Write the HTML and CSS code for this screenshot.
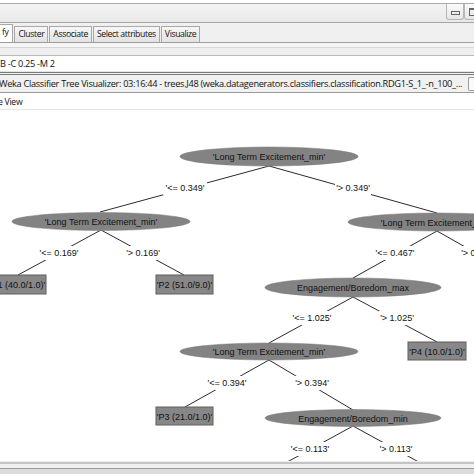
FILE: index.html
```html
<!DOCTYPE html>
<html lang="en">
<head>
  <meta charset="UTF-8" />
  <title>Weka Classifier Tree Visualizer</title>
  <link rel="stylesheet" href="styles.css">
</head>
<body>
  <div class="window">
    <div class="caption">
      <div class="caption-buttons">
        <span class="cap-btn"><span class="min-icon"></span></span>
        <span class="cap-btn"><span class="max-icon"></span></span>
      </div>
    </div>

    <div class="tabs">
      <span class="tab tab-active">fy</span>
      <span class="tab">Cluster</span>
      <span class="tab">Associate</span>
      <span class="tab">Select attributes</span>
      <span class="tab">Visualize</span>
    </div>

    <div class="band"></div>

    <div class="options">B -C 0.25 -M 2</div>

    <div class="viz-title">
      <span class="viz-text">Weka Classifier Tree Visualizer: 03:16:44 - trees.J48 (weka.datagenerators.classifiers.classification.RDG1-S_1_-n_100_...</span>
      <span class="viz-box"></span>
    </div>

    <div class="menu">e View</div>

    <div class="canvas">
      <svg class="tree" width="474" height="352" viewBox="0 110 474 352">
        <!-- edges -->
        <g class="edges">
          <line x1="269" y1="166" x2="100" y2="212" />
          <line x1="269" y1="166" x2="437" y2="213" />
          <line x1="101" y1="230" x2="18" y2="275" />
          <line x1="101" y1="230" x2="184" y2="275" />
          <line x1="437" y1="231" x2="353" y2="278" />
          <line x1="437" y1="231" x2="520" y2="278" />
          <line x1="353" y1="297" x2="269" y2="343" />
          <line x1="353" y1="297" x2="437" y2="342" />
          <line x1="269" y1="360" x2="185" y2="407" />
          <line x1="269" y1="360" x2="353" y2="410" />
          <line x1="353" y1="426" x2="269" y2="472" />
          <line x1="353" y1="426" x2="437" y2="472" />
        </g>

        <!-- edge labels -->
        <g class="labels">
          <rect x="163" y="181" width="44" height="14" /><text x="185" y="188">'&lt;= 0.349'</text>
          <rect x="335" y="181" width="36" height="14" /><text x="353" y="188">'&gt; 0.349'</text>
          <rect x="37" y="246" width="44" height="14" /><text x="59" y="253">'&lt;= 0.169'</text>
          <rect x="125" y="246" width="36" height="14" /><text x="143" y="253">'&gt; 0.169'</text>
          <rect x="373" y="246" width="44" height="14" /><text x="395" y="253">'&lt;= 0.467'</text>
          <rect x="460" y="246" width="36" height="14" /><text x="478" y="253">'&gt; 0.467'</text>
          <rect x="290" y="311" width="44" height="14" /><text x="312" y="318">'&lt;= 1.025'</text>
          <rect x="379" y="311" width="36" height="14" /><text x="397" y="318">'&gt; 1.025'</text>
          <rect x="205" y="376" width="44" height="14" /><text x="227" y="383">'&lt;= 0.394'</text>
          <rect x="294" y="376" width="36" height="14" /><text x="312" y="383">'&gt; 0.394'</text>
          <rect x="288" y="442" width="44" height="14" /><text x="310" y="449">'&lt;= 0.113'</text>
          <rect x="378" y="442" width="36" height="14" /><text x="396" y="449">'&gt; 0.113'</text>
        </g>

        <!-- split nodes -->
        <g class="nodes">
          <ellipse cx="269" cy="156.5" rx="89" ry="9.5" /><text x="269" y="157">'Long Term Excitement_min'</text>
          <ellipse cx="101" cy="221.5" rx="89" ry="9" /><text x="101" y="222">'Long Term Excitement_min'</text>
          <ellipse cx="437" cy="222" rx="89" ry="9" /><text x="437" y="222.5">'Long Term Excitement_min'</text>
          <ellipse cx="353" cy="287.5" rx="88" ry="9.5" /><text x="353" y="288">Engagement/Boredom_max</text>
          <ellipse cx="269" cy="351.5" rx="89" ry="8.5" /><text x="269" y="352">'Long Term Excitement_min'</text>
          <ellipse cx="353" cy="418" rx="88" ry="8.5" /><text x="353" y="418.5">Engagement/Boredom_min</text>
        </g>

        <!-- leaves -->
        <g class="leaves">
          <rect x="-11" y="275" width="57" height="19" /><text x="17.5" y="285">'P1 (40.0/1.0)'</text>
          <rect x="156" y="275" width="57" height="19" /><text x="184.5" y="285">'P2 (51.0/9.0)'</text>
          <rect x="408" y="342" width="58" height="18" /><text x="437" y="351.5">'P4 (10.0/1.0)'</text>
          <rect x="156" y="407" width="57" height="18" /><text x="184.5" y="416.5">'P3 (21.0/1.0)'</text>
        </g>
      </svg>
    </div>

    <div class="bottom"></div>
  </div>
</body>
</html>
```

FILE: styles.css
```css
body {
  margin: 0;
  padding: 0;
  background: #ffffff;
  font-family: "Open Sans", "Noto Sans", sans-serif;
  color: #111;
}

.window {
  width: 474px;
  height: 474px;
  overflow: hidden;
  display: flex;
  flex-direction: column;
}

/* window caption */
.caption {
  height: 18px;
  margin-top: 3px;
  border-top: 1px solid #a9a9a9;
  background: linear-gradient(to bottom, #f3f3f3, #e9e9e9);
  display: flex;
  justify-content: flex-end;
}

.caption-buttons {
  display: flex;
  margin-right: -8px;
}

.cap-btn {
  width: 16px;
  height: 15px;
  border: 1px solid #b7b7b7;
  border-top: none;
  border-radius: 0 0 3px 3px;
  background: linear-gradient(to bottom, #fafafa, #e6e6e6);
  display: flex;
  align-items: center;
  justify-content: center;
}

.min-icon {
  width: 7px;
  height: 2px;
  border: 1px solid #666;
  margin-top: 3px;
}

.max-icon {
  width: 6px;
  height: 5px;
  border: 1px solid #666;
  border-top-width: 2px;
}

/* tab strip */
.tabs {
  height: 19px;
  border-top: 1px solid #a5a5a5;
  border-bottom: 1px solid #9e9e9e;
  background: #f0f0f0;
  display: flex;
  align-items: flex-end;
  gap: 1px;
  font-size: 8.7px;
  letter-spacing: -0.4px;
}

.tab {
  height: 15px;
  line-height: 15px;
  padding: 0 3px;
  border: 1px solid #a8a8a8;
  border-bottom: none;
  background: linear-gradient(to bottom, #f7f7f7, #e2e2e2);
}

.tab:first-child {
  margin-left: -4px;
}

.tab-active {
  height: 17px;
  line-height: 15px;
  background: #ffffff;
  padding: 0 4px 0 5px;
}

.band {
  height: 8px;
  background: #efefef;
  border-top: 4px solid #f5f5f5;
  border-bottom: 1px solid #b9b9b9;
  box-shadow: inset 0 1px 0 #d6d6d6;
}

.options {
  height: 15px;
  line-height: 16px;
  background: #ffffff;
  font-size: 9.2px;
  letter-spacing: -0.3px;
  border-bottom: 1px solid #e4e4e4;
}

.viz-title {
  height: 17px;
  border-top: 3px double #7a7a7a;
  border-bottom: 1px solid #9a9a9a;
  background: #f1f1f1;
  display: flex;
  align-items: center;
  justify-content: space-between;
  font-size: 9.2px;
  letter-spacing: -0.3px;
  white-space: nowrap;
  overflow: hidden;
}

.viz-text {
  margin-left: -1px;
  overflow: hidden;
}

.viz-box {
  flex: none;
  width: 5px;
  height: 12px;
  border: 1px solid #9c9c9c;
  border-right: none;
  border-radius: 2px 0 0 2px;
  background: #fafafa;
}

.menu {
  height: 13px;
  padding-top: 3px;
  line-height: 13px;
  font-size: 8.7px;
  letter-spacing: -0.3px;
  border-bottom: 1px solid #e6e6e6;
  margin-left: -2px;
}

.canvas {
  flex: 1;
  background: #ffffff;
  overflow: hidden;
}

.tree {
  display: block;
  font-family: "Liberation Sans", Arial, sans-serif;
  font-size: 9px;
}

.edges line {
  stroke: #2b2b2b;
  stroke-width: 1;
}

.labels rect {
  fill: #ffffff;
}

.tree text {
  text-anchor: middle;
  dominant-baseline: central;
  fill: #111;
}

.nodes ellipse {
  fill: #838383;
  stroke: #777;
  stroke-width: 0.5;
}

.leaves rect {
  fill: #878787;
  stroke: #5e5e5e;
  stroke-width: 1;
}

.bottom {
  height: 12px;
  background: #dcdcdc;
  border-top: 1px solid #eeeeee;
  box-shadow: inset 0 2px 0 #c4c4c4, inset 0 6px 0 #f0f0f0, inset 0 7px 0 #9c9c9c;
}
```
